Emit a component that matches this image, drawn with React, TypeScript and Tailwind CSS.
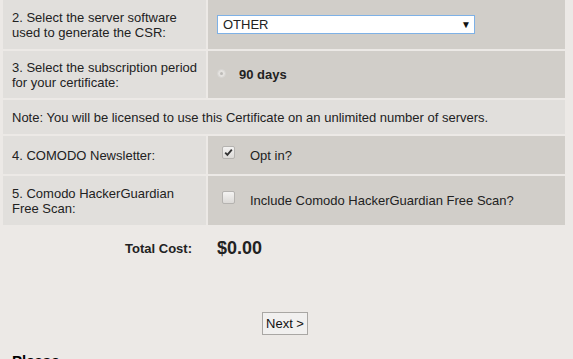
import React from "react";

const cellL = "bg-[#e1dfdc] pl-[9px] pr-2 flex items-center";
const cellR = "bg-[#d1cec9] pl-[9px] pr-2 flex items-center";

function Checkbox({ checked }: { checked?: boolean }) {
  return (
    <span className="w-[13px] h-[13px] shrink-0 rounded-[2px] border border-[#b5b3b0] bg-gradient-to-b from-[#f4f3f2] to-[#dcdad7] flex items-center justify-center">
      {checked && (
        <svg width="9" height="9" viewBox="0 0 9 9">
          <path d="M1.2 4.6 L3.4 6.9 L7.8 1.6" fill="none" stroke="#333" strokeWidth="1.8" />
        </svg>
      )}
    </span>
  );
}

export default function App() {
  return (
    <div
      className="w-[573px] h-[359px] overflow-hidden bg-[#ece9e6] text-[13px] leading-[15px] text-[#222]"
      style={{ fontFamily: '"Liberation Sans", Arial, sans-serif' }}
    >
      <div className="pl-[3px] grid grid-cols-[203px_357px] gap-[2px] grid-rows-[49px_47px_34px_38px_49px]">
        {/* 2. server software */}
        <div className={cellL}>
          <p>2. Select the server software<br />used to generate the CSR:</p>
        </div>
        <div className={cellR}>
          <div className="w-[258px] h-[19px] bg-white border border-[#7eb1e6] flex items-center justify-between pl-[5px] pr-[3px]">
            <span>OTHER</span>
            <span className="text-[10px] text-[#111]">▼</span>
          </div>
        </div>

        {/* 3. subscription period */}
        <div className={cellL}>
          <p>3. Select the subscription period<br />for your certificate:</p>
        </div>
        <div className={`${cellR} pl-[8px]`}>
          <span className="w-[9px] h-[9px] rounded-full bg-[#e4e2df] border border-[#d6d4d1] flex items-center justify-center mr-[13px] -mt-[2px]">
            <span className="w-[3px] h-[3px] rounded-full bg-[#bdbbb8]" />
          </span>
          <span className="font-bold">90 days</span>
        </div>

        {/* note */}
        <div className={`${cellL} col-span-2`}>
          <p>Note: You will be licensed to use this Certificate on an unlimited number of servers.</p>
        </div>

        {/* 4. newsletter */}
        <div className={cellL}>
          <p>4. COMODO Newsletter:</p>
        </div>
        <div className={`${cellR} pl-[14px]`}>
          <span className="-mt-[6px]"><Checkbox checked /></span>
          <span className="ml-[15px]">Opt in?</span>
        </div>

        {/* 5. hackerguardian */}
        <div className={cellL}>
          <p>5. Comodo HackerGuardian<br />Free Scan:</p>
        </div>
        <div className={`${cellR} pl-[14px]`}>
          <span className="-mt-[7px]"><Checkbox /></span>
          <span className="ml-[15px]">Include Comodo HackerGuardian Free Scan?</span>
        </div>

        {/* total */}
        <div className="flex items-center justify-end pr-[14px] h-[42px]">
          <span className="font-bold">Total Cost:</span>
        </div>
        <div className="flex items-center pl-[9px] h-[42px]">
          <span className="font-bold text-[18px]">$0.00</span>
        </div>
      </div>

      <div className="flex justify-center mt-[43px]">
        <button className="h-[23px] px-[3px] border border-[#a9a7a4] bg-[#f1f0ef] text-[13px] text-[#111] leading-none ml-[-3px]">
          Next &gt;
        </button>
      </div>

      <p className="mt-[17px] pl-[12px] font-bold text-[15px] leading-[17px] text-black">Please</p>
    </div>
  );
}
